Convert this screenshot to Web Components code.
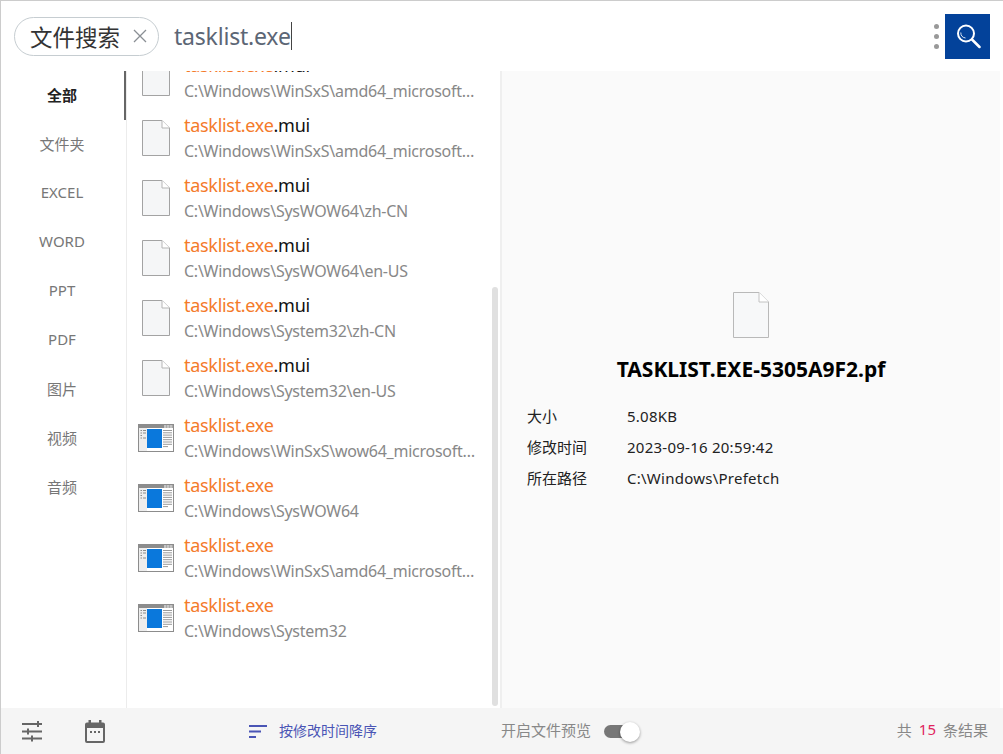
<!DOCTYPE html>
<html lang="zh-CN">
<head>
<meta charset="utf-8">
<title>文件搜索</title>
<style>
  html, body { height: 100%; margin: 0; }
  body {
    background: #fff;
    font-family: "Noto Sans", "Noto Sans CJK SC", sans-serif;
    overflow: hidden;
  }
</style>
</head>
<body>
<search-app></search-app>
<script>
class FileIcon extends HTMLElement {
  constructor () {
    super()
    this.shadow = this.attachShadow({ mode: 'open' })
  }

  connectedCallback () {
    const kind = this.getAttribute('kind')
    const doc = /* html */`
      <svg width="28" height="36" viewBox="0 0 28 36">
        <path d="M.5.5H20L27.500 8V35.500H.5Z" fill="#f5f6f7" stroke="#a3a3a3"/>
        <path d="M20 .5V8H27.500" fill="#fff" stroke="#b5b5b5"/>
      </svg>`
    const exe = /* html */`
      <svg width="36" height="28" viewBox="0 0 36 28">
        <rect width="36" height="28" fill="#8c8c8c"/>
        <rect x="1" y="4" width="34" height="23" fill="#fff"/>
        <rect x="1" y="4" width="8" height="23" fill="#ededed"/>
        <rect x="26" y="1" width="2.500" height="3" fill="#c4c4c4"/>
        <rect x="29" y="1" width="2.500" height="3" fill="#c4c4c4"/>
        <rect x="32" y="1" width="2.500" height="3" fill="#c4c4c4"/>
        <path d="M2.500 6.500h1.500M2.500 9h1.500M2.500 11.500h1.500M2.500 14h1.500M5 6.500h3M5 9h3M5 14h3" stroke="#8c8c8c"/>
        <rect x="9" y="5" width="15" height="19" fill="#0a78dc"/>
        <path d="M25 6.500h9M25 8.800h9M25 11.100h9M25 13.400h9M25 15.700h9M25 18h9M25 20.300h9M25 22.600h5" stroke="#9a9a9a"/>
      </svg>`
    this.shadow.innerHTML = /* html */`
      <style>
        :host { display: block; line-height: 0; }
      </style>
      ${kind === 'exe' ? exe : doc}
    `
  }
}

class NavItem extends HTMLElement {
  constructor () {
    super()
    this.shadow = this.attachShadow({ mode: 'open' })
  }

  connectedCallback () {
    this.shadow.innerHTML = /* html */`
      <style>
        :host {
          align-items: center;
          box-sizing: border-box;
          color: #777;
          display: flex;
          font-size: 15px;
          height: 49px;
          justify-content: center;
          padding: 0 3px 3px 0;
        }

        :host([active]) {
          color: #222;
          font-weight: 700;
        }
      </style>
      <slot></slot>
    `
  }
}

class SearchHeader extends HTMLElement {
  constructor () {
    super()
    this.shadow = this.attachShadow({ mode: 'open' })
  }

  connectedCallback () {
    this.shadow.innerHTML = /* html */`
      <style>
        :host {
          align-items: center;
          background: #fff;
          display: flex;
          height: 70px;
          padding: 0 13px 0 13px;
        }

        .chip {
          align-items: center;
          border: 1px solid #c6cdd1;
          border-radius: 20px;
          box-sizing: border-box;
          color: #333;
          display: flex;
          flex: none;
          font-size: 22.500px;
          height: 39px;
          justify-content: space-between;
          padding: 0 10px 0 15px;
          white-space: nowrap;
          width: 145px;
        }

        .chip svg { flex: none; }

        .query {
          align-items: center;
          color: #5c6675;
          display: flex;
          flex: 1;
          font-size: 23px;
          letter-spacing: -.2px;
          margin-left: 15px;
        }

        .caret {
          background: #444;
          height: 28px;
          width: 1px;
        }

        .dots {
          display: flex;
          flex-direction: column;
          gap: 5px;
          margin-right: 6px;
        }

        .dots i {
          background: #999;
          border-radius: 50%;
          height: 5px;
          width: 5px;
        }

        .go {
          align-items: center;
          background: #03429a;
          display: flex;
          height: 45px;
          justify-content: center;
          width: 45px;
        }
      </style>
      <div class="chip">
        <span>文件搜索</span>
        <svg width="16" height="16" viewBox="0 0 16 16"><path d="M2 2L14 14M14 2L2 14" stroke="#8a8f94" stroke-width="1.300"/></svg>
      </div>
      <div class="query"><span>tasklist.exe</span><span class="caret"></span></div>
      <div class="dots"><i></i><i></i><i></i></div>
      <div class="go">
        <svg width="26" height="26" viewBox="0 0 26 26" fill="none" stroke="#fff">
          <circle cx="11" cy="10.500" r="8" stroke-width="2"/>
          <path d="M17 16.500L24.500 24" stroke-width="2.500" stroke-linecap="round"/>
          <path d="M5.800 9.500A5.500 5.500 0 0 0 10.500 15" stroke-width="1" opacity=".85"/>
        </svg>
      </div>
    `
  }
}

class SideNav extends HTMLElement {
  constructor () {
    super()
    this.shadow = this.attachShadow({ mode: 'open' })
  }

  connectedCallback () {
    const items = ['全部', '文件夹', 'EXCEL', 'WORD', 'PPT', 'PDF', '图片', '视频', '音频']
    this.shadow.innerHTML = /* html */`
      <style>
        :host {
          border-right: 1px solid #ececec;
          display: block;
          position: relative;
          width: 125px;
        }

        .bar {
          background: #666;
          height: 49px;
          position: absolute;
          right: 0;
          top: 0;
          width: 2px;
        }
      </style>
      <div class="items">
        ${items.map((label, i) => `<nav-item ${i === 0 ? 'active' : ''}>${label}</nav-item>`).join('')}
      </div>
      <div class="bar"></div>
    `
  }
}

class ResultItem extends HTMLElement {
  constructor () {
    super()
    this.shadow = this.attachShadow({ mode: 'open' })
  }

  connectedCallback () {
    const kind = this.getAttribute('kind') || 'doc'
    const ext = this.getAttribute('ext') || ''
    this.shadow.innerHTML = /* html */`
      <style>
        :host {
          align-items: center;
          display: flex;
          height: 60px;
          padding-left: 11px;
        }

        .icon {
          display: flex;
          flex: none;
          justify-content: center;
          margin-right: 10px;
          width: 36px;
        }

        .text {
          min-width: 0;
          width: 294px;
        }

        .name {
          color: #111;
          font-size: 18px;
          height: 26px;
          letter-spacing: -.3px;
          line-height: 26px;
          white-space: nowrap;
        }

        .name b {
          color: #f47a2a;
          font-weight: 400;
        }

        .path {
          color: #888;
          font-size: 16px;
          height: 26px;
          letter-spacing: -.25px;
          line-height: 26px;
          overflow: hidden;
          text-overflow: ellipsis;
          white-space: nowrap;
        }
      </style>
      <div class="icon"><file-icon kind="${kind}"></file-icon></div>
      <div class="text">
        <div class="name"><b>tasklist.exe</b>${ext}</div>
        <div class="path"><slot></slot></div>
      </div>
    `
  }
}

class ResultList extends HTMLElement {
  constructor () {
    super()
    this.shadow = this.attachShadow({ mode: 'open' })
  }

  connectedCallback () {
    const rows = [
      ['doc', '.mui', 'C:\\Windows\\WinSxS\\amd64_microsoft-windows-tasklist'],
      ['doc', '.mui', 'C:\\Windows\\WinSxS\\amd64_microsoft-windows-tasklist'],
      ['doc', '.mui', 'C:\\Windows\\SysWOW64\\zh-CN'],
      ['doc', '.mui', 'C:\\Windows\\SysWOW64\\en-US'],
      ['doc', '.mui', 'C:\\Windows\\System32\\zh-CN'],
      ['doc', '.mui', 'C:\\Windows\\System32\\en-US'],
      ['exe', '', 'C:\\Windows\\WinSxS\\wow64_microsoft-windows-tasklist'],
      ['exe', '', 'C:\\Windows\\SysWOW64'],
      ['exe', '', 'C:\\Windows\\WinSxS\\amd64_microsoft-windows-tasklist'],
      ['exe', '', 'C:\\Windows\\System32']
    ]
    this.shadow.innerHTML = /* html */`
      <style>
        :host {
          display: block;
          overflow: hidden;
          position: relative;
          width: 373px;
        }

        .rows { margin-top: -23px; }

        .thumb {
          background: #e0e0e0;
          border-radius: 3px;
          bottom: 2px;
          position: absolute;
          right: 2px;
          top: 216px;
          width: 6px;
        }
      </style>
      <div class="rows">
        ${rows.map(([kind, ext, path]) => `<result-item kind="${kind}" ext="${ext}">${path}</result-item>`).join('')}
      </div>
      <div class="thumb"></div>
    `
  }
}

class PreviewPanel extends HTMLElement {
  constructor () {
    super()
    this.shadow = this.attachShadow({ mode: 'open' })
  }

  connectedCallback () {
    this.shadow.innerHTML = /* html */`
      <style>
        :host {
          background: #fafafa;
          border-left: 2px solid #efefef;
          box-sizing: border-box;
          display: block;
          flex: 1;
          padding-top: 221px;
        }

        .icon {
          display: flex;
          justify-content: center;
        }

        h2 {
          color: #000;
          font-size: 21px;
          font-weight: 700;
          line-height: 28px;
          margin: 17px 0 17px;
          text-align: center;
        }

        .rows {
          align-items: center;
          color: #222;
          display: grid;
          font-size: 15px;
          grid-auto-rows: 31px;
          grid-template-columns: 100px 1fr;
          line-height: 20px;
          padding-left: 25px;
        }

        .value { letter-spacing: .25px; }
      </style>
      <div class="icon">
        <svg width="36" height="46" viewBox="0 0 36 46">
          <path d="M.5.5H26L35.500 10V45.500H.5Z" fill="#f7f8f9" stroke="#b9b9b9"/>
          <path d="M26 .5V10H35.500" fill="#fff" stroke="#c2c2c2"/>
        </svg>
      </div>
      <h2>TASKLIST.EXE-5305A9F2.pf</h2>
      <div class="rows">
        <span>大小</span><span class="value">5.08KB</span>
        <span>修改时间</span><span class="value">2023-09-16 20:59:42</span>
        <span>所在路径</span><span class="value">C:\\Windows\\Prefetch</span>
      </div>
    `
  }
}

class StatusBar extends HTMLElement {
  constructor () {
    super()
    this.shadow = this.attachShadow({ mode: 'open' })
  }

  connectedCallback () {
    this.shadow.innerHTML = /* html */`
      <style>
        :host {
          align-items: center;
          background: #f5f5f5;
          box-sizing: border-box;
          display: flex;
          flex: none;
          font-size: 14px;
          height: 46px;
          padding: 0 15px 0 21px;
        }

        .tools {
          align-items: center;
          display: flex;
          gap: 43px;
          width: 227px;
        }

        .sort {
          align-items: center;
          color: #4a55b5;
          display: flex;
          font-size: 14px;
          gap: 11px;
          width: 252px;
        }

        .sort span, .preview span:first-child, .count span, .count b { margin-bottom: 3px; }

        .preview {
          align-items: center;
          color: #888;
          display: flex;
          flex: 1;
          font-size: 15px;
          gap: 13px;
        }

        .switch {
          background: #777;
          border-radius: 7px;
          height: 13px;
          position: relative;
          width: 28px;
        }

        .switch i {
          background: #fff;
          border-radius: 50%;
          box-shadow: 0 1px 3px rgba(0, 0, 0, .4);
          height: 20px;
          left: 16px;
          position: absolute;
          top: -3px;
          width: 20px;
        }

        .count {
          color: #888;
          display: flex;
          font-size: 15px;
          gap: 7px;
        }

        .count b { color: #e0245e; font-weight: 400; }
      </style>
      <div class="tools">
        <svg width="20" height="21" viewBox="0 0 20 21" fill="#666">
          <path d="M0 2h15v2H0zM17 2h3v2h-3zM15 0h2v6h-2zM0 9.500h5v2H0zM7 9.500h13v2H7zM5 7.500h2v6H5zM0 16.500h9v2H0zM11 16.500h9v2h-9zM9 14.500h2v6H9z"/>
        </svg>
        <svg width="20" height="23" viewBox="0 0 20 23" fill="#666">
          <path d="M3.500 0h2.500v2.500h8V0h2.500v2.500H18a2 2 0 0 1 2 2V21a2 2 0 0 1-2 2H2a2 2 0 0 1-2-2V4.500a2 2 0 0 1 2-2h1.500zM2 8V21h16V8z"/>
          <path d="M5 11h2v2H5zM9 11h2v2H9zM13 11h2v2h-2z"/>
        </svg>
      </div>
      <div class="sort">
        <svg width="19" height="13" viewBox="0 0 19 13" fill="#4a55b5"><path d="M0 0h18v2H0zM0 5.500h12v2H0zM0 11h7v2H0z"/></svg>
        <span>按修改时间降序</span>
      </div>
      <div class="preview">
        <span>开启文件预览</span>
        <span class="switch"><i></i></span>
      </div>
      <div class="count"><span>共</span><b>15</b><span>条结果</span></div>
    `
  }
}

class SearchApp extends HTMLElement {
  constructor () {
    super()
    this.shadow = this.attachShadow({ mode: 'open' })
  }

  connectedCallback () {
    this.shadow.innerHTML = /* html */`
      <style>
        :host {
          border-left: 1px solid #ccc;
          border-top: 1px solid #ccc;
          box-sizing: border-box;
          display: flex;
          flex-direction: column;
          height: 754px;
          width: 1003px;
        }

        main {
          display: flex;
          flex: 1;
          min-height: 0;
          padding-right: 3px;
        }
      </style>
      <search-header></search-header>
      <main>
        <side-nav></side-nav>
        <result-list></result-list>
        <preview-panel></preview-panel>
      </main>
      <status-bar></status-bar>
    `
  }
}

customElements.define('file-icon', FileIcon)
customElements.define('nav-item', NavItem)
customElements.define('search-header', SearchHeader)
customElements.define('side-nav', SideNav)
customElements.define('result-item', ResultItem)
customElements.define('result-list', ResultList)
customElements.define('preview-panel', PreviewPanel)
customElements.define('status-bar', StatusBar)
customElements.define('search-app', SearchApp)
</script>
</body>
</html>
